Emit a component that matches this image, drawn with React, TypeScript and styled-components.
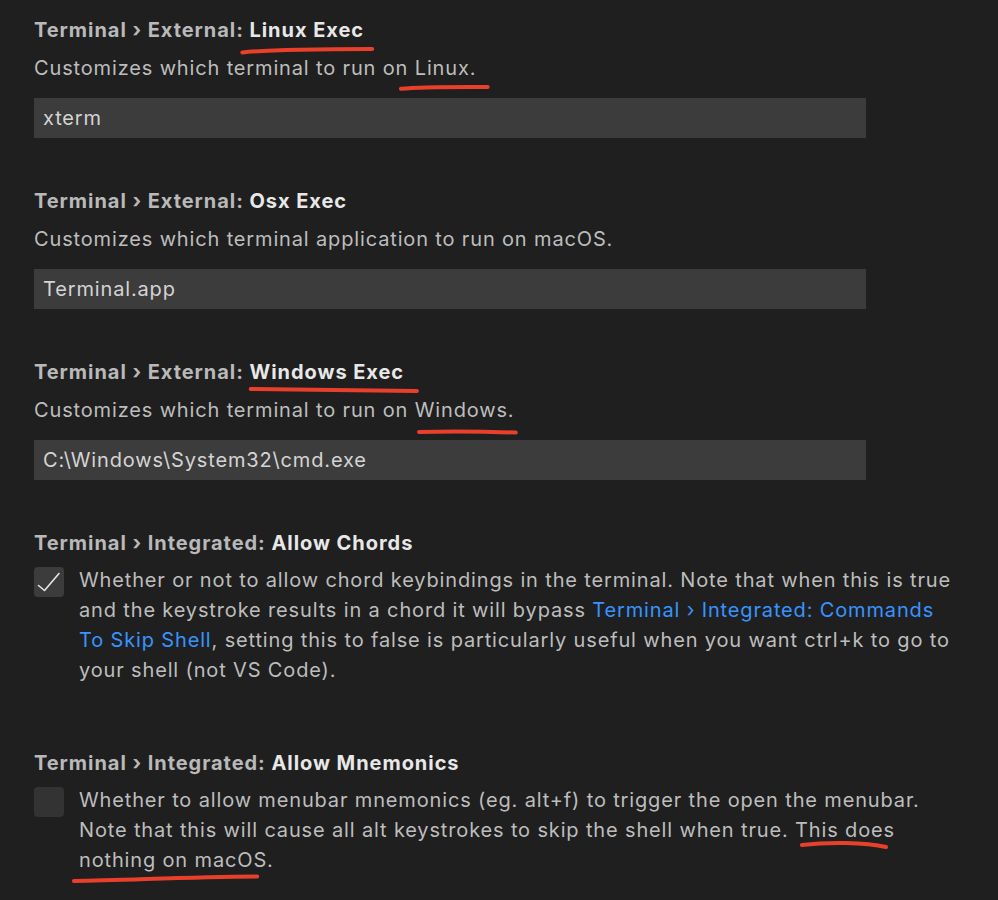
import { createGlobalStyle, styled } from 'styled-components'

const GlobalStyle = createGlobalStyle`
  html, body {
    margin: 0;
    padding: 0;
    background: #1f1f1f;
  }
  body {
    font-family: Inter, "Noto Sans", "Liberation Sans", sans-serif;
    letter-spacing: 0.85px;
    -webkit-font-smoothing: antialiased;
  }
`

type MarkProps = {
  dl: number
  dr: number
  dy: number
  d: string
  children: React.ReactNode
}

function Marked({ dl, dr, dy, d, children }: MarkProps) {
  return (
    <MarkSpan>
      {children}
      <Stroke
        viewBox="0 0 100 10"
        preserveAspectRatio="none"
        style={{
          left: -dl,
          width: `calc(100% + ${dl + dr}px)`,
          top: `calc(100% + ${dy}px)`,
        }}
      >
        <path d={d} />
      </Stroke>
    </MarkSpan>
  )
}

type TitleProps = {
  category: string
  name: React.ReactNode
}

function Title({ category, name }: TitleProps) {
  return (
    <TitleLine>
      <Category>{category}: </Category>
      <Name>{name}</Name>
    </TitleLine>
  )
}

function CheckIcon() {
  return (
    <svg width="30" height="30" viewBox="0 0 30 30">
      <polyline
        points="4.5,18.5 10.5,23.5 25,6.5"
        fill="none"
        stroke="#e6e6e6"
        strokeWidth="1.6"
        strokeLinecap="round"
        strokeLinejoin="round"
      />
    </svg>
  )
}

export default function App() {
  return (
    <Page>
      <GlobalStyle />

      <Setting>
        <Title
          category="Terminal › External"
          name={
            <Marked dl={8} dr={10} dy={4} d="M1,6.5 Q22,3.2 99,3">
              Linux Exec
            </Marked>
          }
        />
        <Description>
          Customizes which terminal to run on{' '}
          <Marked dl={15} dr={12} dy={2} d="M1,6.8 Q25,4.6 99,5">
            Linux.
          </Marked>
        </Description>
        <TextInput>xterm</TextInput>
      </Setting>

      <Setting>
        <Title category="Terminal › External" name="Osx Exec" />
        <Description>Customizes which terminal application to run on macOS.</Description>
        <TextInput>Terminal.app</TextInput>
      </Setting>

      <Setting>
        <Title
          category="Terminal › External"
          name={
            <Marked dl={0} dr={15} dy={0} d="M1,5 C30,5.8 70,6 99,7">
              Windows Exec
            </Marked>
          }
        />
        <Description>
          Customizes which terminal to run on{' '}
          <Marked dl={-3} dr={2} dy={5} d="M1,5 Q50,4 99,5.6">
            Windows.
          </Marked>
        </Description>
        <TextInput>C:\Windows\System32\cmd.exe</TextInput>
      </Setting>

      <CheckSetting>
        <Title category="Terminal › Integrated" name="Allow Chords" />
        <CheckRow>
          <Checkbox checked>
            <CheckIcon />
          </Checkbox>
          <CheckText>
            Whether or not to allow chord keybindings in the terminal. Note that when this is true
            <br />
            and the keystroke results in a chord it will bypass{' '}
            <Link>Terminal › Integrated: Commands</Link>
            <br />
            <Link>To Skip Shell</Link>, setting this to false is particularly useful when you want
            ctrl+k to go to
            <br />
            your shell (not VS Code).
          </CheckText>
        </CheckRow>
      </CheckSetting>

      <CheckSetting>
        <Title category="Terminal › Integrated" name="Allow Mnemonics" />
        <CheckRow>
          <Checkbox />
          <CheckText>
            Whether to allow menubar mnemonics (eg. alt+f) to trigger the open the menubar.
            <br />
            Note that this will cause all alt keystrokes to skip the shell when true.{' '}
            <Marked dl={-6} dr={-8} dy={-3} d="M1,6 C30,3 75,3 99,8">
              This does
            </Marked>
            <br />
            <Marked dl={7} dr={-8} dy={2} d="M1,7 C30,6.3 60,3 99,2.5">
              nothing on macOS
            </Marked>
            .
          </CheckText>
        </CheckRow>
      </CheckSetting>
    </Page>
  )
}

const Page = styled.div`
  width: 998px;
  height: 900px;
  box-sizing: border-box;
  padding: 15px 0 0 34px;
  overflow: hidden;
`

const Setting = styled.section`
  padding-bottom: 48px;
`

const CheckSetting = styled.section`
  padding-bottom: 63px;
`

const TitleLine = styled.div`
  font-size: 20px;
  line-height: 30px;
  font-weight: 700;
  letter-spacing: 0.95px;
  white-space: nowrap;
`

const Category = styled.span`
  color: #b9b9b9;
`

const Name = styled.span`
  color: #e8e8e8;
`

const Description = styled.div`
  margin-top: 8px;
  font-size: 20px;
  line-height: 30px;
  color: #bdbdbd;
`

const TextInput = styled.div`
  margin-top: 15px;
  width: 832px;
  height: 40px;
  box-sizing: border-box;
  padding: 0 9px;
  display: flex;
  align-items: center;
  background: #3c3c3c;
  color: #d4d4d4;
  font-size: 20px;
`

const CheckRow = styled.div`
  margin-top: 7px;
  display: flex;
  align-items: flex-start;
  gap: 15px;
`

const Checkbox = styled.div<{ checked?: boolean }>`
  flex: none;
  margin-top: 2px;
  width: 30px;
  height: 30px;
  border-radius: 4px;
  background: ${({ checked }) => (checked ? '#3c3c3c' : '#333333')};
  display: flex;
  align-items: center;
  justify-content: center;
`

const CheckText = styled.div`
  font-size: 20px;
  line-height: 30px;
  color: #bdbdbd;
  white-space: nowrap;
`

const Link = styled.span`
  color: #3794ff;
`

const MarkSpan = styled.span`
  position: relative;
`

const Stroke = styled.svg`
  position: absolute;
  height: 10px;
  overflow: visible;
  pointer-events: none;

  path {
    fill: none;
    stroke: #e8402a;
    stroke-width: 4px;
    stroke-linecap: round;
    vector-effect: non-scaling-stroke;
  }
`
